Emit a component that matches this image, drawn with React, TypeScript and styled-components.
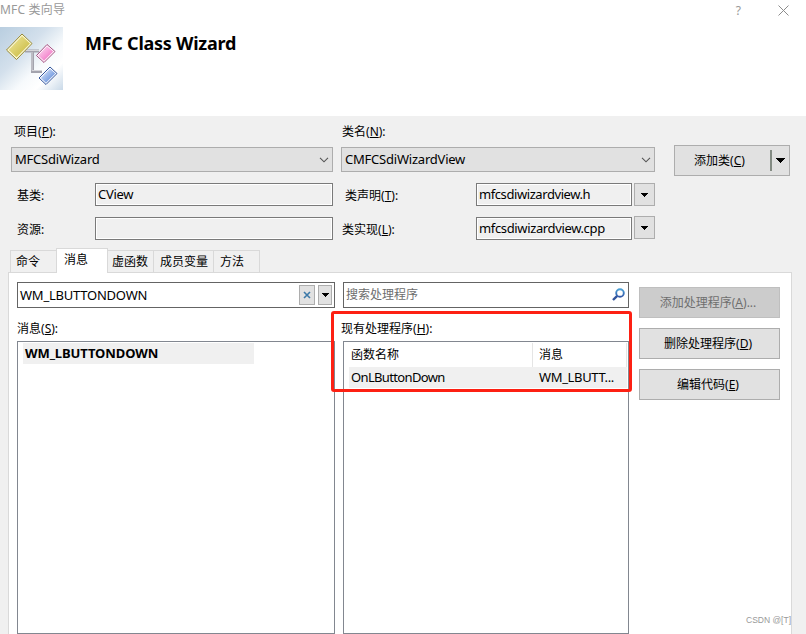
import React from "react";
import styled, { createGlobalStyle, css } from "styled-components";

const GlobalStyle = createGlobalStyle`
  * { box-sizing: border-box; }
  html, body { margin: 0; padding: 0; overflow: hidden; }
  body {
    font: 12px/16px "Noto Sans", "Noto Sans CJK SC", sans-serif;
    color: #000;
    background: #f0f0f0;
  }
`;

const Dialog = styled.div`
  width: 806px;
  height: 634px;
  display: flex;
  flex-direction: column;
  background: #f0f0f0;
  overflow: hidden;
  position: relative;
`;

const TitleBar = styled.header`
  height: 27px;
  flex: none;
  display: flex;
  justify-content: space-between;
  padding: 2px 17px 0 0;
  background: #fff;
  color: #999;
`;

const WindowTitle = styled.span`
  letter-spacing: 0.2px;
`;

const WindowButtons = styled.div`
  display: flex;
  gap: 37px;
  line-height: 17px;
  svg { margin-top: 3px; }
`;

const Banner = styled.section`
  height: 89px;
  flex: none;
  display: flex;
  gap: 22px;
  background: #fff;
`;

const BannerTitle = styled.h1<{ $track: number }>`
  margin: 4px 0 0;
  font-size: 18px;
  line-height: 24px;
  font-weight: 700;
  letter-spacing: ${(p) => p.$track}px;
  white-space: nowrap;
`;

const Form = styled.section`
  height: 132px;
  flex: none;
  display: grid;
  grid-template-columns: 322px 314px 116px;
  grid-template-rows: 23px 25px 23px 23px;
  column-gap: 8px;
  row-gap: 0;
  padding: 8px 0 0 11px;
  align-content: start;
`;

const Label = styled.label<{ $left?: number }>`
  padding-left: ${(p) => p.$left ?? 0}px;
  white-space: nowrap;
`;

const Latin = styled.span<{ $track?: number; $size?: number }>`
  font-size: ${(p) => p.$size ?? 13}px;
  letter-spacing: ${(p) => p.$track ?? 0}px;
  white-space: nowrap;
`;

const Mnemonic = styled.u`
  text-underline-offset: 1px;
  text-decoration-thickness: 1px;
  text-decoration-skip-ink: none;
`;

const Select = styled.div`
  height: 25px;
  display: flex;
  align-items: center;
  justify-content: space-between;
  padding: 0 3px 0 3px;
  border: 1px solid #adadad;
  background: #e1e1e1;
  > span { padding-bottom: 2px; }
`;

const Field = styled.div<{ $width?: number }>`
  width: ${(p) => (p.$width ? `${p.$width}px` : "auto")};
  height: 23px;
  display: flex;
  align-items: center;
  padding: 0 0 2px 2px;
  border: 1px solid #7a7a7a;
  box-shadow: inset 0 0 0 1px #fff;
`;

const FieldRow = styled.div<{ $labelWidth: number; $top: number }>`
  height: 23px;
  margin-top: ${(p) => p.$top}px;
  display: grid;
  grid-template-columns: ${(p) => p.$labelWidth}px 1fr auto;
  align-items: start;
  > label { line-height: 25px; }
`;

const buttonFace = css`
  display: flex;
  align-items: center;
  justify-content: center;
  border: 1px solid #adadad;
  background: #e1e1e1;
  white-space: nowrap;
`;

const DropButton = styled.div<{ $lift?: number }>`
  ${buttonFace}
  width: 21px;
  height: 23px;
  margin-left: 2px;
  margin-top: ${(p) => -(p.$lift ?? 0)}px;
`;

const SplitButton = styled.div`
  ${buttonFace}
  width: 116px;
  height: 31px;
  margin: -2px 0 0 11px;
  justify-content: flex-start;
`;

const SplitLabel = styled.span`
  width: 97px;
  height: 21px;
  padding-left: 19px;
  line-height: 21px;
  border-right: 2px solid #838b83;
`;

const SplitArrow = styled.span`
  flex: 1;
  display: flex;
  justify-content: center;
`;

const TabStrip = styled.nav`
  height: 24px;
  flex: none;
  display: flex;
  align-items: flex-end;
  padding-left: 10px;
  position: relative;
  z-index: 1;
`;

const Tab = styled.div<{ $width: number; $pad: number; $active?: boolean }>`
  width: ${(p) => p.$width}px;
  height: ${(p) => (p.$active ? 25 : 22)}px;
  flex: none;
  padding-left: ${(p) => p.$pad}px;
  line-height: 22px;
  border: 1px solid #d9d9d9;
  border-bottom: 0;
  border-left-width: ${(p) => (p.$active ? 1 : 0)}px;
  border-right-width: 1px;
  background: ${(p) => (p.$active ? "#fff" : "#f0f0f0")};
  margin-bottom: ${(p) => (p.$active ? -1 : 0)}px;
  white-space: nowrap;
  &:first-child { border-left-width: 1px; border-right-width: 0; }
`;

const Panel = styled.main`
  width: 784px;
  flex: 1;
  margin-left: 8px;
  display: grid;
  grid-template-columns: 318px 286px 141px;
  column-gap: 8px;
  padding: 9px 0 0 8px;
  border: 1px solid #d9d9d9;
  border-bottom: 0;
  background: #fff;
`;

const Column = styled.div`
  display: flex;
  flex-direction: column;
  min-height: 0;
`;

const SearchBox = styled.div`
  height: 26px;
  flex: none;
  display: flex;
  align-items: center;
  gap: 3px;
  padding: 0 2px;
  border: 1px solid #646464;
  color: #6d6d6d;
  > :first-child { flex: 1; }
`;

const SearchText = styled.span`
  color: #000;
`;

const SearchIconSlot = styled.span`
  display: flex;
  padding: 0 1px 2px 0;
`;

const SmallButton = styled.span<{ $width: number }>`
  ${buttonFace}
  width: ${(p) => p.$width}px;
  height: 20px;
`;

const ListLabel = styled(Label)`
  height: 33px;
  flex: none;
  padding-top: 13px;
`;

const HandlerLabel = styled(ListLabel)`
  margin-left: -2px;
`;

const List = styled.div`
  flex: 1;
  border: 1px solid #828790;
`;

const SelectedItem = styled.div`
  width: 231px;
  height: 21px;
  margin: 1px 0 0 5px;
  padding-left: 2px;
  line-height: 21px;
  font-weight: 700;
  background: #f0f0f0;
`;

const HandlerRow = styled.div<{ $selected?: boolean }>`
  height: ${(p) => (p.$selected ? 21 : 24)}px;
  margin: ${(p) => (p.$selected ? "0 1px 0 5px" : "1px 1px 0 5px")};
  display: grid;
  grid-template-columns: 184px 1fr;
  align-items: center;
  background: ${(p) => (p.$selected ? "#f0f0f0" : "#fff")};
  > span { padding-left: 2px; }
  > span + span { padding-left: 6px; }
  ${(p) =>
    !p.$selected &&
    css`
      border-right: 1px solid #e5e5e5;
      > span:first-child { border-right: 1px solid #e5e5e5; line-height: 24px; }
    `}
`;

const Actions = styled.div`
  display: flex;
  flex-direction: column;
  gap: 10px;
  padding-top: 5px;
  margin-left: 2px;
`;

const ActionButton = styled.div<{ $disabled?: boolean }>`
  ${buttonFace}
  width: 141px;
  height: 31px;
  padding: 1px 3px 0 0;
  ${(p) =>
    p.$disabled &&
    css`
      background: #ccc;
      border-color: #bfbfbf;
      color: #6f6f6f;
    `}
`;

const Highlight = styled.div`
  position: absolute;
  left: 331px;
  top: 311px;
  width: 301px;
  height: 81px;
  border: 3px solid #fd2013;
  border-radius: 3px;
  z-index: 2;
`;

const Watermark = styled.span`
  position: absolute;
  right: 15px;
  bottom: 7px;
  font: 8.5px/14px "Liberation Sans", sans-serif;
  color: #999;
`;

const Key = ({ k, tail = ":" }: { k: string; tail?: string }) => (
  <Latin $size={12}>
    (<Mnemonic>{k}</Mnemonic>){tail}
  </Latin>
);

const Triangle = () => (
  <svg width="9" height="5" viewBox="0 0 9 5" shapeRendering="crispEdges">
    <path d="M0 0H9V1H8V2H7V3H6V4H5V5H4V4H3V3H2V2H1V1H0Z" fill="#000" />
  </svg>
);

const SmallTriangle = () => (
  <svg width="7" height="4" viewBox="0 0 7 4" shapeRendering="crispEdges">
    <path d="M0 0H7V1H6V2H5V3H4V4H3V3H2V2H1V1H0Z" fill="#000" />
  </svg>
);

const Chevron = () => (
  <svg width="10" height="6" viewBox="0 0 10 6">
    <path d="M1 .8 5 4.8 9 .8" fill="none" stroke="#555" strokeWidth="1.1" />
  </svg>
);

const CloseIcon = () => (
  <svg width="11" height="11" viewBox="0 0 11 11">
    <path d="M.5.5 10.5 10.5M10.5.5.5 10.5" stroke="#8c8c8c" strokeWidth="1" />
  </svg>
);

const ClearIcon = () => (
  <svg width="8" height="8" viewBox="0 0 8 8">
    <path d="M1 1 7 7M7 1 1 7" stroke="#3c79a8" strokeWidth="1.6" />
  </svg>
);

const SearchIcon = () => (
  <svg width="13" height="13" viewBox="0 0 13 13">
    <path d="M1 12 5.2 7.8" stroke="#31539b" strokeWidth="2.4" />
    <circle cx="8" cy="5" r="3.8" fill="#fff" stroke="url(#lens)" strokeWidth="1.9" />
    <defs>
      <linearGradient id="lens" x1="0" y1="0" x2="0" y2="1">
        <stop stopColor="#4aa0d6" />
        <stop offset="1" stopColor="#3157a8" />
      </linearGradient>
    </defs>
  </svg>
);

const WizardLogo = () => (
  <svg width="63" height="63" viewBox="0 0 63 63">
    <defs>
      <linearGradient id="sky" x1="0" y1="0" x2="1" y2="1">
        <stop stopColor="#b9cee0" />
        <stop offset=".38" stopColor="#d3e0ec" />
        <stop offset=".62" stopColor="#f7fafc" />
        <stop offset=".78" stopColor="#fff" />
        <stop offset="1" stopColor="#c9d9e8" />
      </linearGradient>
      <linearGradient id="gold" x1="0" y1="0" x2="1" y2="1">
        <stop stopColor="#f1e9a0" />
        <stop offset="1" stopColor="#c4b436" />
      </linearGradient>
      <linearGradient id="pink" x1="0" y1="0" x2="1" y2="1">
        <stop stopColor="#fde4f4" />
        <stop offset="1" stopColor="#f060bd" />
      </linearGradient>
      <linearGradient id="blue" x1="0" y1="0" x2="1" y2="1">
        <stop stopColor="#e8f0fc" />
        <stop offset="1" stopColor="#4a7cd6" />
      </linearGradient>
    </defs>
    <rect width="63" height="63" fill="url(#sky)" />
    <path d="M25 24H39M32.5 24V44.5H42" fill="none" stroke="#a3a3ad" strokeWidth="3" />
    <path d="M25 23.5H39M32 25V43.5H42" fill="none" stroke="#d5d5da" strokeWidth="1" />
    <path d="M22 7 32 16.5 16.5 32.5 6.5 23Z" fill="#fbf8d2" stroke="#978936" strokeWidth="1" />
    <path d="M22 9 30 16.5 16.5 30.3 8.7 23Z" fill="url(#gold)" />
    <path d="M47 17.5 55 24.5 44 35.5 36.5 28.5Z" fill="#fff" stroke="#a44c80" strokeWidth="1" />
    <path d="M47 19.3 53.2 24.6 44 33.8 38.1 28.4Z" fill="url(#pink)" />
    <path d="M50 40 57 46.5 46 57.5 39 51Z" fill="#fff" stroke="#30539c" strokeWidth="1" />
    <path d="M50 41.7 55.3 46.6 46 55.8 40.8 51Z" fill="url(#blue)" />
  </svg>
);

export default function App() {
  return (
    <Dialog>
      <GlobalStyle />
      <TitleBar>
        <WindowTitle>MFC 类向导</WindowTitle>
        <WindowButtons>
          <span>?</span>
          <CloseIcon />
        </WindowButtons>
      </TitleBar>
      <Banner>
        <WizardLogo />
        <BannerTitle $track={-0.25}>MFC Class Wizard</BannerTitle>
      </Banner>

      <Form>
        <Label $left={3}>项目<Key k="P" /></Label>
        <Label $left={1}>类名<Key k="N" /></Label>
        <span />
        <Select><Latin $track={-0.22}>MFCSdiWizard</Latin><Chevron /></Select>
        <Select><Latin $track={-0.22}>CMFCSdiWizardView</Latin><Chevron /></Select>
        <SplitButton>
          <SplitLabel>添加类<Key k="C" tail="" /></SplitLabel>
          <SplitArrow><Triangle /></SplitArrow>
        </SplitButton>
        <FieldRow $labelWidth={84} $top={11}>
          <Label $left={6}>基类:</Label>
          <Field><Latin $track={-0.3}>CView</Latin></Field>
        </FieldRow>
        <FieldRow $labelWidth={135} $top={11}>
          <Label $left={4}>类声明<Key k="T" /></Label>
          <Field $width={156}><Latin $track={-0.42}>mfcsdiwizardview.h</Latin></Field>
          <DropButton><SmallTriangle /></DropButton>
        </FieldRow>
        <span />
        <FieldRow $labelWidth={84} $top={22}>
          <Label $left={6}>资源:</Label>
          <Field />
        </FieldRow>
        <FieldRow $labelWidth={135} $top={22}>
          <Label $left={1}>类实现<Key k="L" /></Label>
          <Field $width={156}><Latin $track={-0.36}>mfcsdiwizardview.cpp</Latin></Field>
          <DropButton $lift={1}><SmallTriangle /></DropButton>
        </FieldRow>
      </Form>

      <TabStrip>
        <Tab $width={46} $pad={5}>命令</Tab>
        <Tab $width={52} $pad={7} $active>消息</Tab>
        <Tab $width={46} $pad={4}>虚函数</Tab>
        <Tab $width={60} $pad={6}>成员变量</Tab>
        <Tab $width={46} $pad={6}>方法</Tab>
      </TabStrip>

      <Panel>
        <Column>
          <SearchBox>
            <SearchText><Latin $track={-0.23}>WM_LBUTTONDOWN</Latin></SearchText>
            <SmallButton $width={16}><ClearIcon /></SmallButton>
            <SmallButton $width={14}><SmallTriangle /></SmallButton>
          </SearchBox>
          <ListLabel>消息<Key k="S" /></ListLabel>
          <List>
            <SelectedItem><Latin $track={-0.1}>WM_LBUTTONDOWN</Latin></SelectedItem>
          </List>
        </Column>
        <Column>
          <SearchBox>
            <span>搜索处理程序</span>
            <SearchIconSlot><SearchIcon /></SearchIconSlot>
          </SearchBox>
          <HandlerLabel>现有处理程序<Key k="H" /></HandlerLabel>
          <List>
            <HandlerRow><span>函数名称</span><span>消息</span></HandlerRow>
            <HandlerRow $selected>
              <span><Latin $track={-0.65}>OnLButtonDown</Latin></span>
              <span><Latin $track={-0.35}>WM_LBUTT...</Latin></span>
            </HandlerRow>
          </List>
        </Column>
        <Actions>
          <ActionButton $disabled>添加处理程序<Key k="A" tail="..." /></ActionButton>
          <ActionButton>删除处理程序<Key k="D" tail="" /></ActionButton>
          <ActionButton>编辑代码<Key k="E" tail="" /></ActionButton>
        </Actions>
      </Panel>
      <Highlight />
      <Watermark>CSDN @[T]</Watermark>
    </Dialog>
  );
}
